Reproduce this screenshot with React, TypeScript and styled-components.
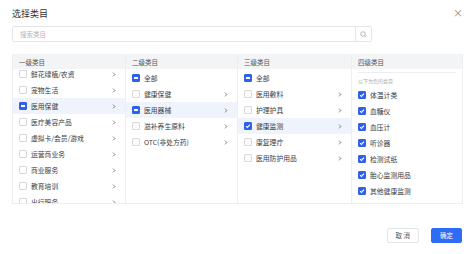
import styled, { createGlobalStyle } from "styled-components";

type CheckState = "none" | "half" | "checked";

interface Item {
  label: string;
  state?: CheckState;
  active?: boolean;
  arrow?: boolean;
}

const level1: Item[] = [
  { label: "鲜花绿植/农资", arrow: true },
  { label: "宠物生活", arrow: true },
  { label: "医用保健", state: "half", active: true, arrow: true },
  { label: "医疗美容产品", arrow: true },
  { label: "虚拟卡/会员/游戏", arrow: true },
  { label: "运营商业务", arrow: true },
  { label: "商业服务", arrow: true },
  { label: "教育培训", arrow: true },
  { label: "出行服务", arrow: true },
];

const level2: Item[] = [
  { label: "全部", state: "half" },
  { label: "健康保健", arrow: true },
  { label: "医用器械", state: "half", active: true, arrow: true },
  { label: "滋补养生原料", arrow: true },
  { label: "OTC(非处方药)", arrow: true },
];

const level3: Item[] = [
  { label: "全部", state: "half" },
  { label: "医用敷料", arrow: true },
  { label: "护理护具", arrow: true },
  { label: "健康监测", state: "checked", active: true, arrow: true },
  { label: "康复理疗", arrow: true },
  { label: "医用防护用品", arrow: true },
];

const level4: Item[] = [
  "体温计类",
  "血糖仪",
  "血压计",
  "听诊器",
  "检测试纸",
  "胎心监测用品",
  "其他健康监测",
].map((label) => ({ label, state: "checked" as CheckState }));

function CheckBox({ state = "none" }: { state?: CheckState }): React.ReactElement {
  return (
    <Box $on={state !== "none"}>
      {state === "half" && <HalfBar />}
      {state === "checked" && (
        <svg width="6" height="6" viewBox="0 0 10 10">
          <path d="M1.8 5.2 L4 7.4 L8.4 2.8" fill="none" stroke="#fff" strokeWidth="1.8" />
        </svg>
      )}
    </Box>
  );
}

function Column({
  title,
  items,
  offset = 0,
  note,
}: {
  title: string;
  items: Item[];
  offset?: number;
  note?: string;
}): React.ReactElement {
  return (
    <Col>
      <ColHead>{title}</ColHead>
      {note && <NoteLine />}
      <List>
        <ListInner $offset={offset}>
          {note && <Note>{note}</Note>}
          {items.map((item, i) => (
            <Row key={i} $active={!!item.active}>
              <CheckBox state={item.state} />
              <RowText>{item.label}</RowText>
              {item.arrow && (
                <svg width="4" height="5" viewBox="0 0 4 6">
                  <path d="M0.8 0.8 L3 3 L0.8 5.2" fill="none" stroke="#555" strokeWidth="0.9" />
                </svg>
              )}
            </Row>
          ))}
        </ListInner>
      </List>
    </Col>
  );
}

export default function App(): React.ReactElement {
  return (
    <>
      <GlobalStyle />
      <Dialog>
        <Header>
          <Title>选择类目</Title>
          <Close>×</Close>
        </Header>
        <Search>
          <SearchInput placeholder="搜索类目" />
          <SearchBtn>
            <svg width="7" height="7" viewBox="0 0 12 12">
              <circle cx="5.2" cy="5.2" r="3.9" fill="none" stroke="#999" strokeWidth="1.2" />
              <path d="M8 8 L10.8 10.8" stroke="#999" strokeWidth="1.2" />
            </svg>
          </SearchBtn>
        </Search>
        <Table>
          <Column title="一级类目" items={level1} offset={-4} />
          <Column title="二级类目" items={level2} />
          <Column title="三级类目" items={level3} />
          <Column title="四级类目" items={level4} note="以下为您的类目" />
        </Table>
        <Footer>
          <Button type="button">取 消</Button>
          <Button type="button" $primary>
            确定
          </Button>
        </Footer>
      </Dialog>
    </>
  );
}

const GlobalStyle = createGlobalStyle`
  html, body {
    margin: 0;
    padding: 0;
    background: #fff;
  }
  body {
    font-family: "Noto Sans CJK SC", "Noto Sans", sans-serif;
    color: #333;
  }
`;

const Dialog = styled.div`
  width: 474px;
  height: 254px;
  box-sizing: border-box;
  padding: 0 11px 0 12px;
  display: flex;
  flex-direction: column;
`;

const Header = styled.header`
  height: 26px;
  display: flex;
  align-items: center;
  justify-content: space-between;
`;

const Title = styled.h2`
  margin: 0;
  font-size: 9px;
  font-weight: 400;
  color: #333;
`;

const Close = styled.span`
  font-size: 10px;
  color: #888;
  line-height: 1;
`;

const Search = styled.div`
  width: 360px;
  height: 16px;
  box-sizing: border-box;
  border: 1px solid #e4e6ea;
  border-radius: 2px;
  display: flex;
`;

const SearchInput = styled.input`
  flex: 1;
  border: none;
  outline: none;
  padding: 0 7px;
  font-family: inherit;
  font-size: 6.5px;
  background: transparent;
  &::placeholder {
    color: #b5b5b5;
  }
`;

const SearchBtn = styled.div`
  width: 15px;
  border-left: 1px solid #e4e6ea;
  display: flex;
  align-items: center;
  justify-content: center;
`;

const Table = styled.div`
  margin-top: 12px;
  height: 149px;
  display: grid;
  grid-template-columns: 113px 112px 114px 112px;
  border-bottom: 1px solid #eceef1;
  overflow: hidden;
`;

const Col = styled.div`
  display: flex;
  flex-direction: column;
  min-height: 0;
  border-left: 1px solid #eceef1;
  &:last-child {
    border-right: 1px solid #eceef1;
  }
`;

const ColHead = styled.div`
  position: relative;
  z-index: 1;
  height: 15px;
  flex-shrink: 0;
  background: #f3f4f6;
  padding-left: 6px;
  display: flex;
  align-items: center;
  font-size: 6.5px;
  color: #555;
`;

const NoteLine = styled.div`
  height: 1px;
  margin: 3px 6px 0;
  background: #eceef1;
`;

const List = styled.div`
  flex: 1;
  min-height: 0;
  overflow: hidden;
  padding-top: 1px;
`;

const ListInner = styled.div<{ $offset: number }>`
  margin-top: ${(p) => p.$offset}px;
`;

const Note = styled.div`
  height: 13px;
  padding-left: 6px;
  display: flex;
  align-items: center;
  font-size: 5px;
  color: #aaa;
`;

const Row = styled.div<{ $active: boolean }>`
  height: 16px;
  display: flex;
  align-items: center;
  padding: 0 9px 0 6px;
  background: ${(p) => (p.$active ? "#eef3fc" : "transparent")};
`;

const Box = styled.span<{ $on: boolean }>`
  width: 8px;
  height: 8px;
  box-sizing: border-box;
  border-radius: 1px;
  border: 1px solid ${(p) => (p.$on ? "#2f62e8" : "#d6d8dc")};
  background: ${(p) => (p.$on ? "#2f62e8" : "#fff")};
  display: flex;
  align-items: center;
  justify-content: center;
  flex-shrink: 0;
`;

const HalfBar = styled.span`
  width: 4px;
  height: 1.5px;
  background: #fff;
`;

const RowText = styled.span`
  margin-left: 4px;
  flex: 1;
  font-size: 6.8px;
  color: #3a3a3a;
  white-space: nowrap;
`;

const Footer = styled.footer`
  margin-top: 24px;
  display: flex;
  justify-content: flex-end;
  gap: 12px;
  padding-right: 1px;
`;

const Button = styled.button<{ $primary?: boolean }>`
  height: 15px;
  padding: 0 8px;
  border-radius: 2px;
  font-family: inherit;
  font-size: 6.5px;
  border: 1px solid ${(p) => (p.$primary ? "#2f6cf5" : "#e2e4e8")};
  background: ${(p) => (p.$primary ? "#2f6cf5" : "#fff")};
  color: ${(p) => (p.$primary ? "#fff" : "#555")};
  line-height: 1;
`;
